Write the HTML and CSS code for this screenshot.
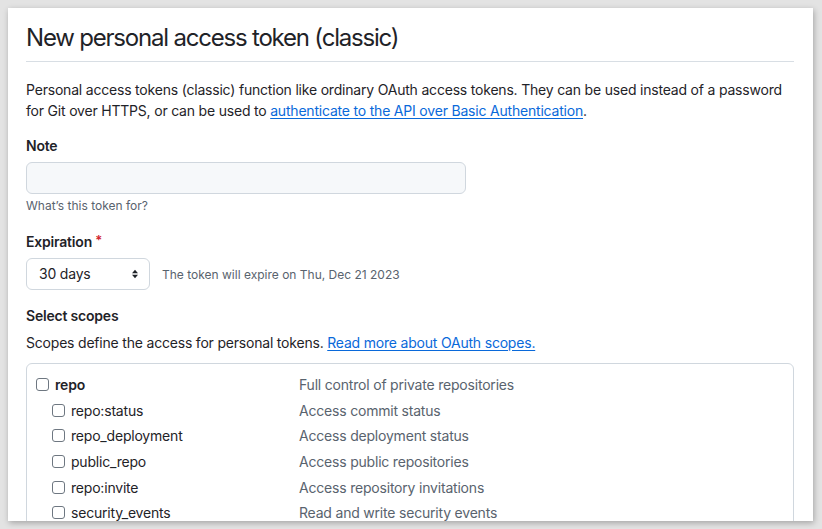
FILE: index.html
```html
<!DOCTYPE html>
<html lang="en">
<head>
<meta charset="utf-8">
<title>New personal access token (classic)</title>
<link rel="stylesheet" href="styles.css">
</head>
<body>
<main class="panel">
  <h1 class="title">New personal access token (classic)</h1>
  <p class="intro">Personal access tokens (classic) function like ordinary OAuth access tokens. They can be used instead of a password for Git over HTTPS, or can be used to <a href="#">authenticate to the API over Basic Authentication</a>.</p>

  <label class="label label-note" for="note">Note</label>
  <input class="text-input" id="note" type="text">
  <p class="hint">What’s this token for?</p>

  <div class="label label-exp">Expiration <span class="req">*</span></div>
  <div class="exp-row">
    <button class="select" type="button">
      <span>30 days</span>
      <svg width="8" height="12" viewBox="0 0 8 12" aria-hidden="true"><path d="M4 1.8 7 5.2H1z M4 10.2 1 6.8h6z" fill="#1f2328"/></svg>
    </button>
    <span class="exp-note">The token will expire on Thu, Dec 21 2023</span>
  </div>

  <div class="label label-scopes">Select scopes</div>
  <p class="scopes-desc">Scopes define the access for personal tokens. <a href="#">Read more about OAuth scopes.</a></p>

  <div class="scope-box">
    <div class="scope-row parent">
      <label class="scope-name"><input type="checkbox" class="cb"><b>repo</b></label>
      <span class="scope-desc">Full control of private repositories</span>
    </div>
    <div class="scope-row child">
      <label class="scope-name"><input type="checkbox" class="cb">repo:status</label>
      <span class="scope-desc">Access commit status</span>
    </div>
    <div class="scope-row child">
      <label class="scope-name"><input type="checkbox" class="cb">repo_deployment</label>
      <span class="scope-desc">Access deployment status</span>
    </div>
    <div class="scope-row child">
      <label class="scope-name"><input type="checkbox" class="cb">public_repo</label>
      <span class="scope-desc">Access public repositories</span>
    </div>
    <div class="scope-row child">
      <label class="scope-name"><input type="checkbox" class="cb">repo:invite</label>
      <span class="scope-desc">Access repository invitations</span>
    </div>
    <div class="scope-row child">
      <label class="scope-name"><input type="checkbox" class="cb">security_events</label>
      <span class="scope-desc">Read and write security events</span>
    </div>
  </div>
</main>
</body>
</html>
```
FILE: styles.css
```css
* { box-sizing: border-box; }
html, body { height: 100%; }
body {
  margin: 0;
  padding: 8px 9px 8px 8px;
  background: #e3e3e3;
  font-family: Inter, "Noto Sans", "Liberation Sans", sans-serif;
  color: #1f2328;
  overflow: hidden;
}
.panel {
  background: #fff;
  height: 513px;
  overflow: hidden;
  padding: 15px 19px 0 18px;
  box-shadow: 1px 2px 6px rgba(0,0,0,0.28);
}
.title {
  margin: 0;
  font-size: 24px;
  line-height: 30px;
  font-weight: 400;
  letter-spacing: -1.2px;
  padding-bottom: 8px;
  border-bottom: 1px solid #d8dee4;
}
.intro {
  margin: 17px 0 0;
  font-size: 14px;
  line-height: 21px;
  letter-spacing: -0.2px;
}
a { color: #0969da; text-decoration: underline; text-underline-offset: 2px; }
.label {
  display: block;
  font-size: 14px;
  line-height: 20px;
  font-weight: 600;
  letter-spacing: -0.2px;
}
.label-note { margin-top: 15px; margin-bottom: 6px; }
.text-input {
  display: block;
  width: 440px;
  height: 32px;
  margin: 0;
  background: #f6f8fa;
  border: 1px solid #d0d7de;
  border-radius: 6px;
  font: inherit;
}
.hint {
  margin: 3px 0 0;
  font-size: 12px;
  line-height: 18px;
  color: #59636e;
}
.label-exp { margin-top: 17px; margin-bottom: 6px; }
.req { color: #d1242f; font-size: 13px; line-height: 0; vertical-align: 2px; }
.exp-row { display: flex; align-items: center; gap: 12px; }
.select {
  display: flex;
  align-items: center;
  justify-content: space-between;
  width: 124px;
  height: 32px;
  padding: 0 10px 1px 12px;
  background: #fff;
  border: 1px solid #d0d7de;
  border-radius: 6px;
  font: inherit;
  font-size: 14px;
  letter-spacing: -0.2px;
  color: #1f2328;
}
.exp-note { font-size: 12px; color: #59636e; }
.label-scopes { margin-top: 16px; }
.scopes-desc {
  margin: 6px 0 0;
  font-size: 14px;
  line-height: 21px;
  letter-spacing: -0.2px;
}
.scope-box {
  margin-top: 10px;
  border: 1px solid #d0d7de;
  border-radius: 6px;
  padding: 8px 0 0 9px;
  font-size: 14px;
  letter-spacing: -0.2px;
}
.scope-row {
  display: grid;
  grid-template-columns: 263px 1fr;
  height: 25.6px;
  align-items: center;
}
.scope-name { display: flex; align-items: center; }
.child .scope-name { padding-left: 16px; }
.scope-name b { font-weight: 600; }
.cb {
  appearance: none;
  -webkit-appearance: none;
  width: 13px;
  height: 13px;
  margin: 0 6px 0 0;
  border: 1px solid #6e7781;
  border-radius: 3px;
  background: #fff;
}
.scope-desc { color: #59636e; }
```
